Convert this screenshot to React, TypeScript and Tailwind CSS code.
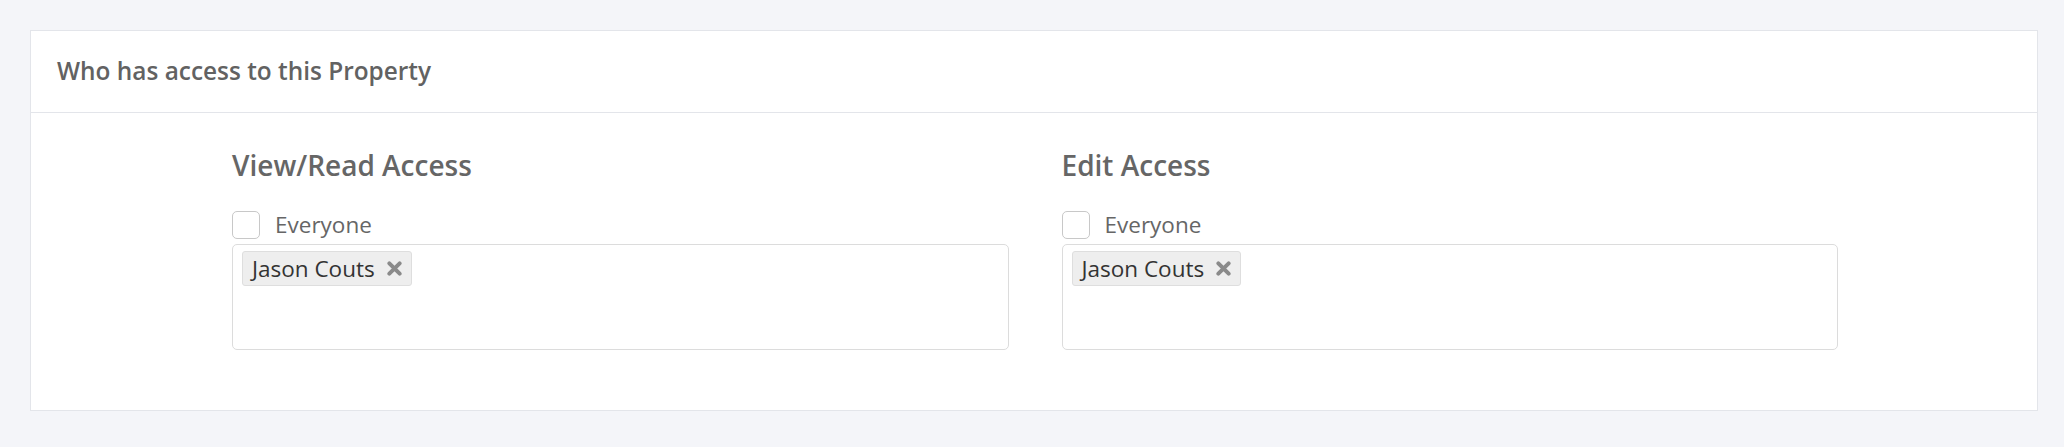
import React from "react";

function RemoveIcon() {
  return (
    <svg viewBox="0 0 16 16" className="h-[15px] w-[15px] text-[#8a8a8a]" aria-hidden="true">
      <path d="M2.5 2.5 L13.5 13.5 M13.5 2.5 L2.5 13.5" stroke="currentColor" strokeWidth="4.2" strokeLinecap="round" />
    </svg>
  );
}

function AccessColumn({ title, users }: { title: string; users: string[] }) {
  return (
    <div className="flex flex-col">
      <h3 className="text-[28px] leading-[32px] font-semibold text-[#666666]">{title}</h3>

      {/* Everyone checkbox */}
      <label className="mt-[30px] flex items-center gap-[15px] h-[28px]">
        <span className="inline-block h-[28px] w-[28px] rounded-[5px] border border-[#c8c8c8] bg-white" />
        <span className="text-[22.5px] text-[#666666]">Everyone</span>
      </label>

      {/* Tag input */}
      <div className="mt-[5px] h-[106px] rounded-[5px] border border-[#dcdcdc] bg-white pl-[9px] pt-[6px]">
        <div className="flex flex-wrap gap-2">
          {users.map((u) => (
            <span
              key={u}
              className="inline-flex h-[35px] items-center gap-[12px] rounded-[3px] border border-[#dedede] bg-[#eeeeee] pl-[9px] pr-[9px] text-[22.5px] text-[#333333]"
            >
              {u}
              <RemoveIcon />
            </span>
          ))}
        </div>
      </div>
    </div>
  );
}

export default function App() {
  return (
    <div
      className="min-h-screen bg-[#f4f5f9] pl-[30px] pr-[26px] pt-[30px]"
      style={{ fontFamily: '"Open Sans", "Liberation Sans", sans-serif' }}
    >
      <div className="border border-[#e3e5ea] bg-white">
        <div className="flex h-[82px] items-center border-b border-[#e3e5ea] px-[26px]">
          <h2 className="text-[24.4px] font-semibold text-[#626262]">Who has access to this Property</h2>
        </div>
        <div className="grid grid-cols-2 gap-[53px] pl-[201px] pr-[199px] pt-[36px] pb-[60px]">
          <AccessColumn title="View/Read Access" users={["Jason Couts"]} />
          <AccessColumn title="Edit Access" users={["Jason Couts"]} />
        </div>
      </div>
    </div>
  );
}
